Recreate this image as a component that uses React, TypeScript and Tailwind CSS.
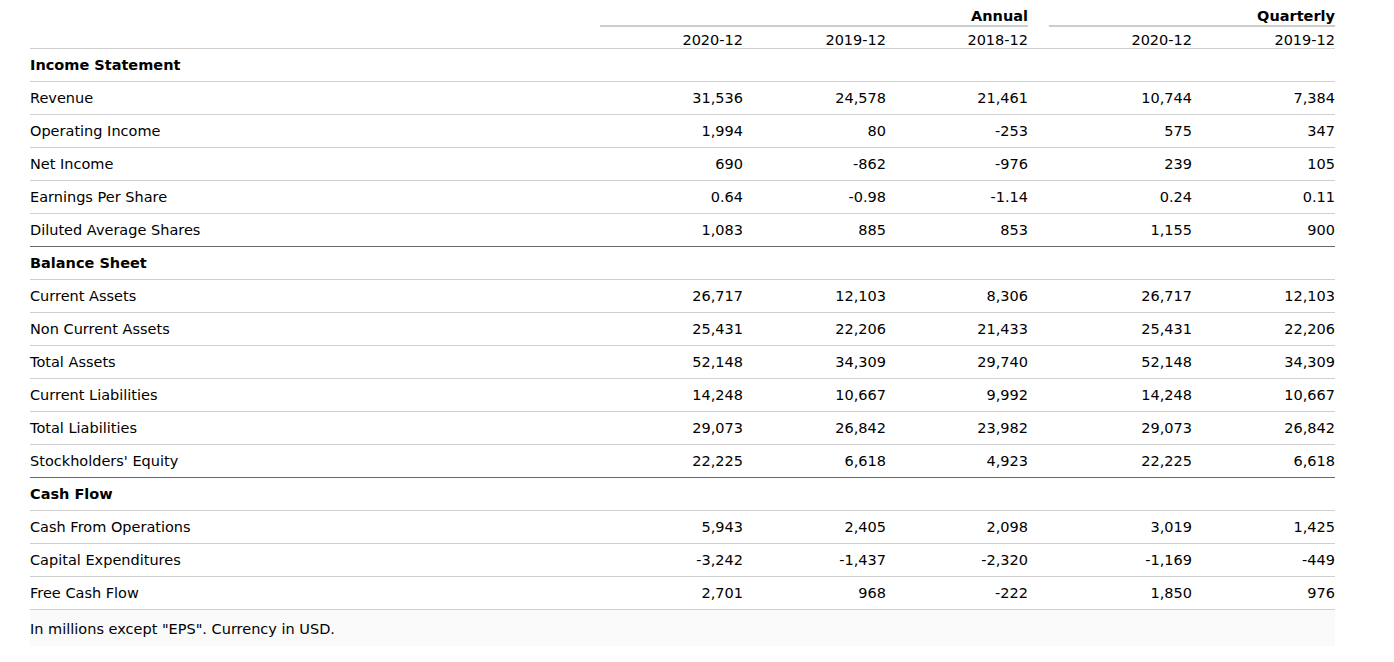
const cols = "grid grid-cols-[570px_143px_143px_142px_21px_143px_143px]";

type Row = { label: string; vals: string[] };
type Section = { title: string; rows: Row[] };

const sections: Section[] = [
  {
    title: "Income Statement",
    rows: [
      { label: "Revenue", vals: ["31,536", "24,578", "21,461", "10,744", "7,384"] },
      { label: "Operating Income", vals: ["1,994", "80", "-253", "575", "347"] },
      { label: "Net Income", vals: ["690", "-862", "-976", "239", "105"] },
      { label: "Earnings Per Share", vals: ["0.64", "-0.98", "-1.14", "0.24", "0.11"] },
      { label: "Diluted Average Shares", vals: ["1,083", "885", "853", "1,155", "900"] },
    ],
  },
  {
    title: "Balance Sheet",
    rows: [
      { label: "Current Assets", vals: ["26,717", "12,103", "8,306", "26,717", "12,103"] },
      { label: "Non Current Assets", vals: ["25,431", "22,206", "21,433", "25,431", "22,206"] },
      { label: "Total Assets", vals: ["52,148", "34,309", "29,740", "52,148", "34,309"] },
      { label: "Current Liabilities", vals: ["14,248", "10,667", "9,992", "14,248", "10,667"] },
      { label: "Total Liabilities", vals: ["29,073", "26,842", "23,982", "29,073", "26,842"] },
      { label: "Stockholders' Equity", vals: ["22,225", "6,618", "4,923", "22,225", "6,618"] },
    ],
  },
  {
    title: "Cash Flow",
    rows: [
      { label: "Cash From Operations", vals: ["5,943", "2,405", "2,098", "3,019", "1,425"] },
      { label: "Capital Expenditures", vals: ["-3,242", "-1,437", "-2,320", "-1,169", "-449"] },
      { label: "Free Cash Flow", vals: ["2,701", "968", "-222", "1,850", "976"] },
    ],
  },
];

function DataRow({ row, last, final }: { row: Row; last: boolean; final: boolean }) {
  const border = last && !final ? "border-[#6b6b6b]" : "border-[#cfcfcf]";
  return (
    <div className={`${cols} h-[33px] items-center pt-[2px] border-b ${border}`}>
      <div>{row.label}</div>
      <div className="text-right">{row.vals[0]}</div>
      <div className="text-right">{row.vals[1]}</div>
      <div className="text-right">{row.vals[2]}</div>
      <div />
      <div className="text-right">{row.vals[3]}</div>
      <div className="text-right">{row.vals[4]}</div>
    </div>
  );
}

export default function App() {
  return (
    <div className="min-h-screen bg-white text-black font-['DejaVu_Sans',sans-serif] text-[14.5px]">
      <div className="ml-[30px] w-[1305px]">
        {/* group headers */}
        <div className={`${cols} h-[27px] items-end`}>
          <div />
          <div className="col-span-3 border-b-2 border-[#cccccc] text-right font-bold leading-[17px]">
            Annual
          </div>
          <div />
          <div className="col-span-2 border-b-2 border-[#cccccc] text-right font-bold leading-[17px]">
            Quarterly
          </div>
        </div>
        <div className={`${cols} h-[22px] items-end leading-[16px] border-b border-[#cfcfcf]`}>
          <div />
          <div className="text-right">2020-12</div>
          <div className="text-right">2019-12</div>
          <div className="text-right">2018-12</div>
          <div />
          <div className="text-right">2020-12</div>
          <div className="text-right">2019-12</div>
        </div>

        {sections.map((s, si) => (
          <div key={s.title}>
            <div className="flex h-[33px] items-center pt-[1px] border-b border-[#cfcfcf] font-bold">
              {s.title}
            </div>
            {s.rows.map((r, ri) => (
              <DataRow
                key={r.label}
                row={r}
                last={ri === s.rows.length - 1}
                final={si === sections.length - 1}
              />
            ))}
          </div>
        ))}

        <div className="flex h-[36px] items-center pt-[3px] bg-[#fafafa]">
          In millions except "EPS". Currency in USD.
        </div>
      </div>
    </div>
  );
}
